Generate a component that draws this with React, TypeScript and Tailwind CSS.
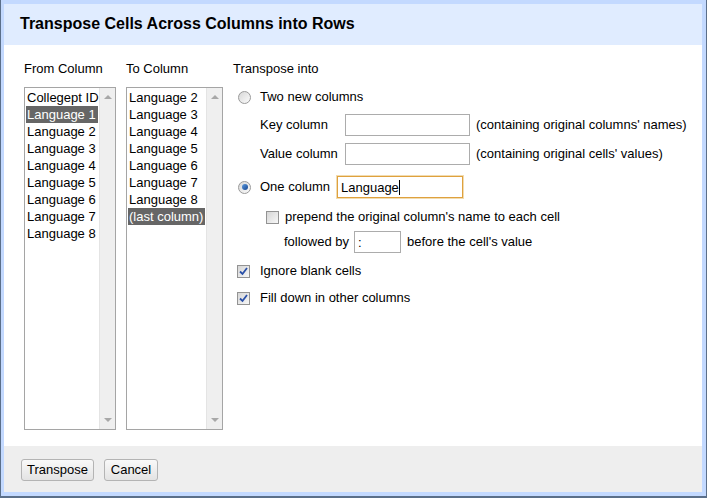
import React from 'react';

const fromItems = ['Collegept ID', 'Language 1', 'Language 2', 'Language 3', 'Language 4', 'Language 5', 'Language 6', 'Language 7', 'Language 8'];
const toItems = ['Language 2', 'Language 3', 'Language 4', 'Language 5', 'Language 6', 'Language 7', 'Language 8', '(last column)'];

const ListBox = ({ items, selected, width }: { items: string[]; selected: string; width: string }) => (
  <div className={`${width} h-[343px] flex border border-[#a5a5a5] bg-white`}>
    <div className="flex-1 p-px overflow-hidden">
      {items.map((item) => (
        <div
          key={item}
          className={`h-[17px] leading-[17px] pl-[1px] whitespace-nowrap ${item === selected ? 'bg-[#666666] text-white' : 'text-black'}`}
        >
          {item}
        </div>
      ))}
    </div>
    {/* Scrollbar */}
    <div className="w-[16px] bg-[#efefef] border-l border-[#e4e4e4] flex flex-col justify-between items-center py-[7px]">
      <div className="w-0 h-0 border-l-[4px] border-r-[4px] border-b-[4px] border-l-transparent border-r-transparent border-b-[#a8a8a8]" />
      <div className="w-0 h-0 border-l-[4px] border-r-[4px] border-t-[4px] border-l-transparent border-r-transparent border-t-[#a8a8a8]" />
    </div>
  </div>
);

const Radio = ({ checked }: { checked?: boolean }) => (
  <div className="w-[13px] h-[13px] rounded-full border border-[#9a9a9a] bg-gradient-to-br from-[#d8d8d8] to-[#fbfbfb] flex items-center justify-center shrink-0">
    {checked && <div className="w-[6px] h-[6px] rounded-full bg-gradient-to-br from-[#5d9be0] to-[#17468f]" />}
  </div>
);

const Checkbox = ({ checked }: { checked?: boolean }) => (
  <div className="w-[13px] h-[13px] border border-[#939393] bg-gradient-to-br from-[#d6d6d6] to-[#f7f7f7] flex items-center justify-center shrink-0">
    {checked && (
      <svg width="9" height="9" viewBox="0 0 9 9">
        <path d="M1 4.5 L3.5 7 L8 1" fill="none" stroke="#2a50a8" strokeWidth="1.8" />
      </svg>
    )}
  </div>
);

const TextBox = ({ w, value, focused }: { w: string; value?: string; focused?: boolean }) => (
  <div
    className={`${w} h-[22px] flex items-center px-[3px] bg-white border ${focused ? 'border-[#dfa13e] ring-1 ring-[#f2dcb0]' : 'border-[#acacac]'}`}
  >
    <span className="leading-none">{value}</span>
    {focused && <span className="w-px h-[15px] bg-black" />}
  </div>
);

const App = () => {
  return (
    <div
      className="w-[707px] h-[498px] bg-[#c3d9ff] border-l border-r border-b-2 border-[#5b6f8a] pl-[3px] pr-[4px] pt-[4px] pb-[4px] flex flex-col text-[13px] text-black"
      style={{ fontFamily: '"Liberation Sans", Arial, sans-serif' }}
    >
      {/* Header */}
      <div className="h-[41px] bg-[#e0ecff] flex items-center pl-[16px] pb-px">
        <h1 className="text-[16px] font-bold">Transpose Cells Across Columns into Rows</h1>
      </div>

      {/* Body */}
      <div className="flex-1 bg-white flex pl-[20px] pt-[15px] gap-[10px]">
        <div className="flex flex-col gap-[10px]">
          <div className="h-[17px] leading-[17px]">From Column</div>
          <ListBox items={fromItems} selected="Language 1" width="w-[92px]" />
        </div>
        <div className="flex flex-col gap-[10px]">
          <div className="h-[17px] leading-[17px]">To Column</div>
          <ListBox items={toItems} selected="(last column)" width="w-[97px]" />
        </div>
        <div className="flex flex-col">
          <div className="h-[17px] leading-[17px]">Transpose into</div>

          <div className="h-[20px] mt-[10px] flex items-center pl-[5px]">
            <Radio />
            <span className="ml-[9px]">Two new columns</span>
          </div>

          <div className="h-[22px] mt-[7px] flex items-center pl-[27px]">
            <span className="w-[85px]">Key column</span>
            <TextBox w="w-[125px]" />
            <span className="ml-[6px]">(containing original columns' names)</span>
          </div>

          <div className="h-[22px] mt-[7px] flex items-center pl-[27px]">
            <span className="w-[85px]">Value column</span>
            <TextBox w="w-[125px]" />
            <span className="ml-[6px]">(containing original cells' values)</span>
          </div>

          <div className="h-[22px] mt-[11px] flex items-center pl-[5px]">
            <Radio checked />
            <span className="ml-[9px] w-[77px]">One column</span>
            <TextBox w="w-[126px]" value="Language" focused />
          </div>

          <div className="h-[18px] mt-[10px] flex items-center pl-[33px]">
            <Checkbox />
            <span className="ml-[6px]">prepend the original column's name to each cell</span>
          </div>

          <div className="h-[22px] mt-[5px] flex items-center pl-[51px]">
            <span className="w-[70px]">followed by</span>
            <TextBox w="w-[47px]" value=":" />
            <span className="ml-[6px]">before the cell's value</span>
          </div>

          <div className="h-[18px] mt-[9px] flex items-center pl-[4px]">
            <Checkbox checked />
            <span className="ml-[10px]">Ignore blank cells</span>
          </div>

          <div className="h-[18px] mt-[9px] flex items-center pl-[4px]">
            <Checkbox checked />
            <span className="ml-[10px]">Fill down in other columns</span>
          </div>
        </div>
      </div>

      {/* Footer */}
      <div className="h-[46px] bg-[#eeeeee] flex items-center pl-[17px] gap-[10px] pt-px">
        <button className="h-[22px] w-[73px] rounded-[3px] border border-[#b4b4b4] bg-gradient-to-b from-[#f9f9f9] to-[#e3e3e3] leading-none">
          Transpose
        </button>
        <button className="h-[22px] w-[54px] rounded-[3px] border border-[#b4b4b4] bg-gradient-to-b from-[#f9f9f9] to-[#e3e3e3] leading-none">
          Cancel
        </button>
      </div>
    </div>
  );
};

export default App;
